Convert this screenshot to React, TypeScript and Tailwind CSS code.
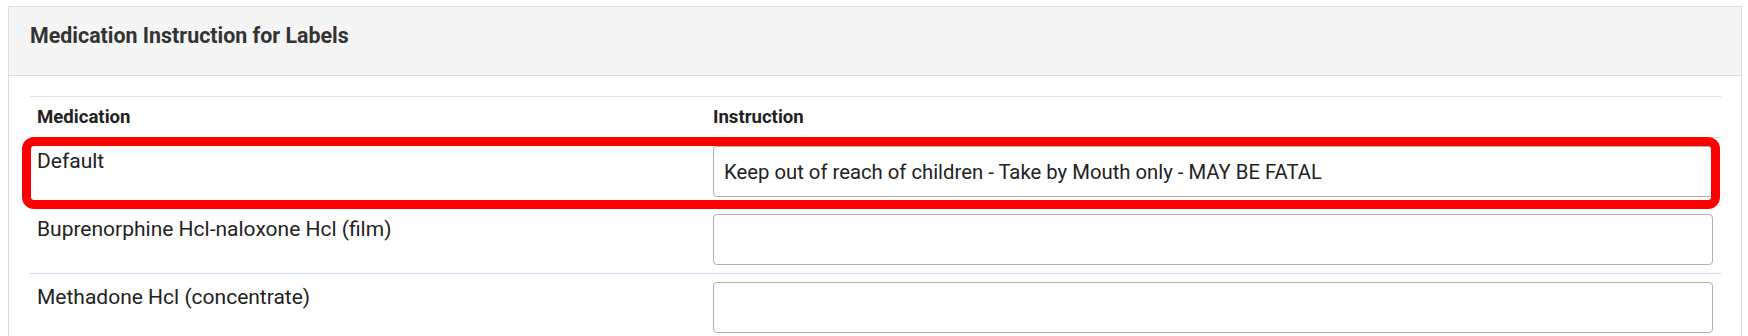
import React from 'react'

const rows = [
  { name: 'Default', instruction: 'Keep out of reach of children - Take by Mouth only - MAY BE FATAL' },
  { name: 'Buprenorphine Hcl-naloxone Hcl (film)', instruction: '' },
  { name: 'Methadone Hcl (concentrate)', instruction: '' },
]

export default function App() {
  return (
    <div
      className="min-h-screen bg-white pl-[8px] pr-[6px] pt-[6px]"
      style={{ fontFamily: 'Roboto, "Liberation Sans", sans-serif' }}
    >
      <div className="border border-[#dddddd] bg-white">
        {/* Panel header */}
        <div className="h-[69px] border-b border-[#dddddd] bg-[#f5f5f5] pl-[21px] pt-[14px]">
          <h2 className="text-[21.4px] font-bold leading-[30px] text-[#333333]">
            Medication Instruction for Labels
          </h2>
        </div>

        {/* Panel body */}
        <div className="pl-[21px] pr-[20px] pt-[20px] pb-4">
          <div className="relative">
            <table className="w-full table-fixed border-collapse text-[#222222]">
              <colgroup>
                <col className="w-[675px]" />
                <col />
              </colgroup>
              <thead>
                <tr className="border-t border-[#d3e1f2]">
                  <th className="px-[7px] py-[8px] text-left text-[18.6px] font-bold leading-[24px]">Medication</th>
                  <th className="px-[8px] py-[8px] text-left text-[18.6px] font-bold leading-[24px]">Instruction</th>
                </tr>
              </thead>
              <tbody>
                {rows.map((row) => (
                  <tr key={row.name} className="border-t border-[#c9ddf9]">
                    <td className="px-[7px] py-[8px] align-top text-[21px] leading-[30px]">{row.name}</td>
                    <td className="px-[8px] py-[8px] align-top">
                      <input
                        type="text"
                        defaultValue={row.instruction}
                        className="block h-[51px] w-full rounded-[4px] border border-[#b0b0b0] bg-white px-[10px] text-[20.3px] text-[#222222] outline-none"
                      />
                    </td>
                  </tr>
                ))}
              </tbody>
            </table>

            {/* highlight annotation */}
            <div className="pointer-events-none absolute left-[-8px] right-[1px] top-[41px] h-[72px] rounded-[12px] border-[9px] border-[#ff0000]" />
          </div>
        </div>
      </div>
    </div>
  )
}
